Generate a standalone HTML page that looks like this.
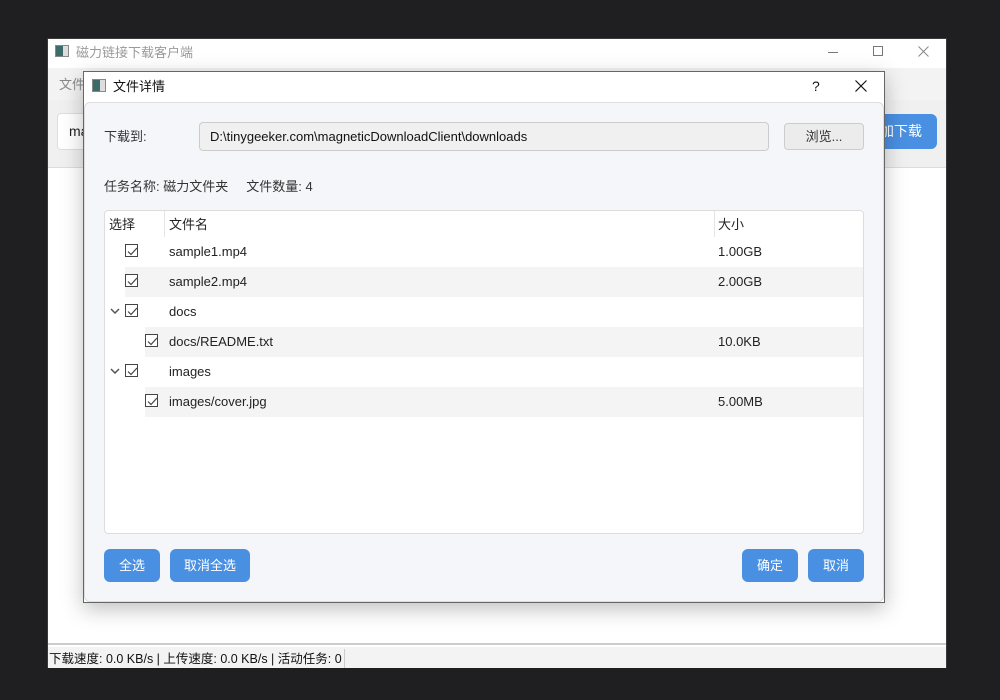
<!DOCTYPE html>
<html><head><meta charset="utf-8"><style>
*{margin:0;padding:0;box-sizing:border-box}
body{width:1000px;height:700px;background:#1f1f22;position:relative;overflow:hidden;font-family:"Liberation Sans","Noto Sans CJK SC",sans-serif;font-size:13px;line-height:16px;color:#222}
.a{position:absolute}
.btn{position:absolute;background:#4a90e2;color:#fff;border-radius:6px;text-align:center;font-size:13px}
.cb{position:absolute;width:13px;height:13px;border:1px solid #444;background:#fff}
.cb svg{position:absolute;left:1px;top:1px}
.row{position:absolute;left:0;right:0;height:30px}
.row span{position:absolute;top:7px}
</style></head><body>
<div class="a" style="left:47px;top:38px;width:900px;height:630px;background:#fff;border:1px solid #3a3a3a"></div>
<div class="a" style="left:55px;top:45px;width:14px;height:12px;border:1px solid #888;background:linear-gradient(90deg,#3d6b6a 60%,#ddd 60%)"></div>
<div class="a" style="left:76px;top:45px;color:#9a9a9a;font-size:13px">磁力链接下载客户端</div>
<div class="a" style="left:828px;top:52px;width:10px;height:1px;background:#777"></div>
<div class="a" style="left:873px;top:46px;width:10px;height:10px;border:1px solid #777"></div>
<svg class="a" style="left:918px;top:46px" width="11" height="11"><path d="M0.5 0.5L10.5 10.5M10.5 0.5L0.5 10.5" stroke="#888" stroke-width="1"/></svg>
<div class="a" style="left:48px;top:68px;width:898px;height:32px;background:#f3f3f3"></div>
<div class="a" style="left:59px;top:77px;color:#888">文件</div>
<div class="a" style="left:48px;top:100px;width:898px;height:67px;background:#f0f0f0"></div>
<div class="a" style="left:57px;top:113px;width:60px;height:37px;background:#fff;border:1px solid #ddd;border-radius:4px"></div>
<div class="a" style="left:69px;top:123px;font-size:14px">ma</div>
<div class="btn" style="left:860px;top:114px;width:77px;height:35px;line-height:35px;font-size:14px;text-align:right;padding-right:15px">添加下载</div>
<div class="a" style="left:48px;top:167px;width:898px;height:478px;background:#fff;border-top:1px solid #ddd;border-bottom:2px solid #ccc"></div>
<div class="a" style="left:48px;top:647px;width:898px;height:21px;background:#f3f3f3"></div>
<div class="a" style="left:49px;top:649px;font-size:12.5px;color:#111;padding-right:2px;border-right:1px solid #ccc;height:19px;line-height:20px">下载速度: 0.0 KB/s | 上传速度: 0.0 KB/s | 活动任务: 0</div>

<!-- dialog -->
<div class="a" style="left:83px;top:71px;width:802px;height:532px;background:#fff;border:1px solid #666;box-shadow:0 6px 20px rgba(0,0,0,.25)"></div>
<div class="a" style="left:92px;top:79px;width:14px;height:13px;border:1px solid #888;background:linear-gradient(90deg,#3d6b6a 60%,#ddd 60%)"></div>
<div class="a" style="left:113px;top:79px;font-size:13px;color:#111">文件详情</div>
<div class="a" style="left:812px;top:78px;font-size:14px;color:#111">?</div>
<svg class="a" style="left:855px;top:80px" width="12" height="12"><path d="M0.5 0.5L11.5 11.5M11.5 0.5L0.5 11.5" stroke="#111" stroke-width="1.2"/></svg>
<div class="a" style="left:84px;top:102px;width:800px;height:500px;background:#f5f6fa;border:1px solid #ddd;border-radius:6px"></div>
<div class="a" style="left:104px;top:129px;font-size:13px;color:#333">下载到:</div>
<div class="a" style="left:199px;top:122px;width:570px;height:29px;background:#f0f0f0;border:1px solid #ccc;border-radius:4px;padding:6px 10px;font-size:13px;color:#111">D:\tinygeeker.com\magneticDownloadClient\downloads</div>
<div class="a" style="left:784px;top:123px;width:80px;height:27px;background:#ececec;border:1px solid #ccc;border-radius:4px;text-align:center;line-height:25px;font-size:13px;color:#333">浏览...</div>
<div class="a" style="left:104px;top:179px;font-size:13px;color:#333">任务名称: 磁力文件夹&nbsp;&nbsp;&nbsp;&nbsp;&nbsp;文件数量: 4</div>

<div class="a" style="left:104px;top:210px;width:760px;height:324px;background:#fff;border:1px solid #ddd;border-radius:4px;overflow:hidden">
 <div class="a" style="left:4px;top:6px">选择</div>
 <div class="a" style="left:59px;top:0;width:1px;height:26px;background:#e4e4e4"></div>
 <div class="a" style="left:64px;top:6px">文件名</div>
 <div class="a" style="left:609px;top:0;width:1px;height:26px;background:#e4e4e4"></div>
 <div class="a" style="left:613px;top:6px">大小</div>
 <div class="row" style="top:26px"><span style="left:64px">sample1.mp4</span><span style="left:613px">1.00GB</span></div>
 <div class="row" style="top:56px;left:20px;background:#f4f4f4"><span style="left:44px">sample2.mp4</span><span style="left:593px">2.00GB</span></div>
 <div class="row" style="top:86px"><span style="left:64px">docs</span></div>
 <div class="row" style="top:116px;left:40px;background:#f4f4f4"><span style="left:24px">docs/README.txt</span><span style="left:573px">10.0KB</span></div>
 <div class="row" style="top:146px"><span style="left:64px">images</span></div>
 <div class="row" style="top:176px;left:40px;background:#f4f4f4"><span style="left:24px">images/cover.jpg</span><span style="left:573px">5.00MB</span></div>
 <div class="cb" style="left:20px;top:33px"><svg width="11" height="11"><path d="M1 5.5L4 8.5L10 2" stroke="#444" fill="none" stroke-width="1.2"/></svg></div>
 <div class="cb" style="left:20px;top:63px"><svg width="11" height="11"><path d="M1 5.5L4 8.5L10 2" stroke="#444" fill="none" stroke-width="1.2"/></svg></div>
 <div class="cb" style="left:20px;top:93px"><svg width="11" height="11"><path d="M1 5.5L4 8.5L10 2" stroke="#444" fill="none" stroke-width="1.2"/></svg></div>
 <div class="cb" style="left:40px;top:123px"><svg width="11" height="11"><path d="M1 5.5L4 8.5L10 2" stroke="#444" fill="none" stroke-width="1.2"/></svg></div>
 <div class="cb" style="left:20px;top:153px"><svg width="11" height="11"><path d="M1 5.5L4 8.5L10 2" stroke="#444" fill="none" stroke-width="1.2"/></svg></div>
 <div class="cb" style="left:40px;top:183px"><svg width="11" height="11"><path d="M1 5.5L4 8.5L10 2" stroke="#444" fill="none" stroke-width="1.2"/></svg></div>
 <svg class="a" style="left:5px;top:97px" width="10" height="6"><path d="M1 1L5 5L9 1" stroke="#555" fill="none" stroke-width="1.5"/></svg>
 <svg class="a" style="left:5px;top:157px" width="10" height="6"><path d="M1 1L5 5L9 1" stroke="#555" fill="none" stroke-width="1.5"/></svg>
</div>

<div class="btn" style="left:104px;top:549px;width:56px;height:33px;line-height:33px">全选</div>
<div class="btn" style="left:170px;top:549px;width:80px;height:33px;line-height:33px">取消全选</div>
<div class="btn" style="left:742px;top:549px;width:56px;height:33px;line-height:33px">确定</div>
<div class="btn" style="left:808px;top:549px;width:56px;height:33px;line-height:33px">取消</div>
</body></html>
